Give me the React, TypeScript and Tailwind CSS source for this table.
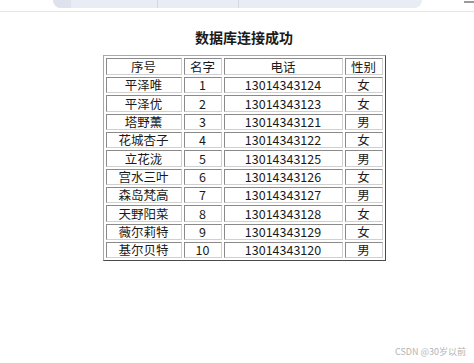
const rows = [
  { name: '平泽唯', id: 1, phone: '13014343124', sex: '女' },
  { name: '平泽优', id: 2, phone: '13014343123', sex: '女' },
  { name: '塔野薰', id: 3, phone: '13014343121', sex: '男' },
  { name: '花城杏子', id: 4, phone: '13014343122', sex: '女' },
  { name: '立花泷', id: 5, phone: '13014343125', sex: '男' },
  { name: '宫水三叶', id: 6, phone: '13014343126', sex: '女' },
  { name: '森岛梵高', id: 7, phone: '13014343127', sex: '男' },
  { name: '天野阳菜', id: 8, phone: '13014343128', sex: '女' },
  { name: '薇尔莉特', id: 9, phone: '13014343129', sex: '女' },
  { name: '基尔贝特', id: 10, phone: '13014343120', sex: '男' },
]

const cell =
  'border border-t-[#8a8a8a] border-l-[#8a8a8a] border-b-[#d0d0d0] border-r-[#d0d0d0] p-0 text-center align-middle'

export default function App() {
  return (
    <div className="w-[474px] h-[363px] bg-white relative overflow-hidden font-['Noto_Sans_CJK_SC','Noto_Sans',sans-serif] text-[#1a1a1a]">
      {/* browser chrome strip */}
      <div className="h-[12px] border-b border-[#e6e6e6] flex items-start">
        <div className="ml-[53px] w-[370px] h-[8px] bg-[#e8ecf4] rounded-b-[8px] flex">
          <div className="w-[18px] h-[8px] rounded-bl-full bg-[#dde2ec]" />
          <div className="ml-[86px] w-px h-[8px] bg-[#d4d8e0]" />
          <div className="ml-[80px] w-px h-[8px] bg-[#d4d8e0]" />
        </div>
        <div className="ml-[42px] mt-[1px] w-[10px] h-[2px] bg-[#9a9a9a]" />
      </div>

      <h1 className="mt-[16px] text-center text-[14px] leading-[18px] font-bold pl-[14px]">数据库连接成功</h1>

      <div className="mt-[9px] flex justify-center pl-[14px]">
        <table className="border-separate border-spacing-[2px] border border-t-[#a8a8a8] border-l-[#a8a8a8] border-r-[#4a4a4a] border-b-[#4a4a4a] text-[12.5px] leading-[14px]">
          <thead>
            <tr className="h-[17px]">
              <th className={`${cell} w-[76px] font-normal`}>序号</th>
              <th className={`${cell} w-[38px] font-normal`}>名字</th>
              <th className={`${cell} w-[119px] font-normal`}>电话</th>
              <th className={`${cell} w-[38px] font-normal`}>性别</th>
            </tr>
          </thead>
          <tbody>
            {rows.map((r, i) => (
              <tr key={r.id} className={i % 3 === 1 ? 'h-[17px]' : 'h-[16px]'}>
                <td className={cell}>{r.name}</td>
                <td className={cell}>{r.id}</td>
                <td className={cell}>{r.phone}</td>
                <td className={cell}>{r.sex}</td>
              </tr>
            ))}
          </tbody>
        </table>
      </div>

      <div className="absolute right-[8px] bottom-[5px] text-[9px] text-[#b4b4b4]">CSDN @30岁以前</div>
    </div>
  )
}
